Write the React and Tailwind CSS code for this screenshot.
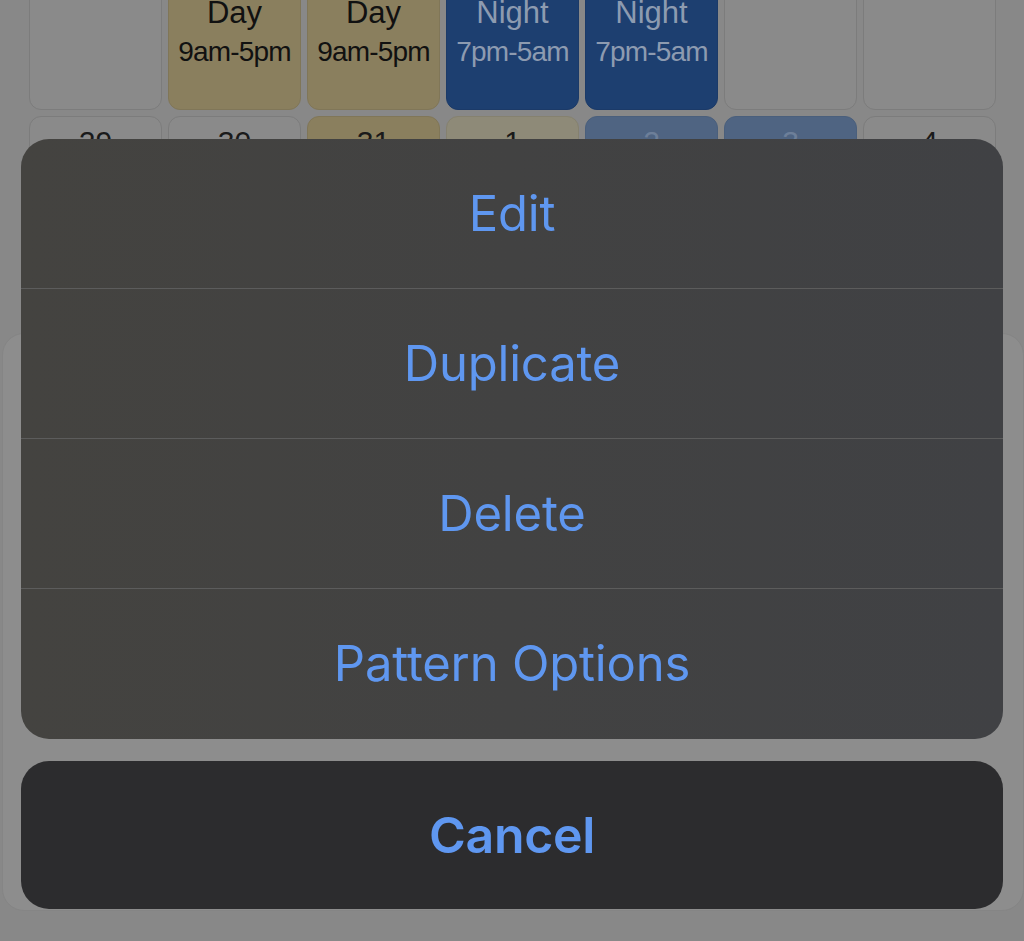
import React from "react";

const row1 = [
  { kind: "empty" },
  { kind: "day" },
  { kind: "day" },
  { kind: "night" },
  { kind: "night" },
  { kind: "empty" },
  { kind: "empty" },
];

const row2 = [
  { n: "29", cls: "bg-[#8a8a8a] border-[#7c7c7c]" },
  { n: "30", cls: "bg-[#8a8a8a] border-[#7c7c7c]" },
  { n: "31", cls: "bg-[#8a7f5e] border-[#807658]" },
  { n: "1", cls: "bg-[#8e8a78] border-[#85816f]" },
  { n: "2", cls: "bg-[#4f6482] border-[#4a5f7c] text-[#6d7f99]" },
  { n: "3", cls: "bg-[#4f6482] border-[#4a5f7c] text-[#6d7f99]" },
  { n: "4", cls: "bg-[#8a8a8a] border-[#7c7c7c]" },
];

function TopCell({ kind }) {
  if (kind === "day") {
    return (
      <div className="h-[150px] rounded-[12px] border border-[#807658] bg-[#8a7f5e] flex flex-col items-center pt-[36px] text-[#111] leading-none">
        <span className="text-[31px]">Day</span>
        <span className="text-[28px] mt-[10px] tracking-[-0.8px]">9am-5pm</span>
      </div>
    );
  }
  if (kind === "night") {
    return (
      <div className="h-[150px] rounded-[12px] border border-[#1b3a68] bg-[#1d3f70] flex flex-col items-center pt-[36px] text-[#8d9bb0] leading-none">
        <span className="text-[31px]">Night</span>
        <span className="text-[28px] mt-[10px] tracking-[-0.8px]">7pm-5am</span>
      </div>
    );
  }
  return <div className="h-[150px] rounded-[12px] border border-[#7c7c7c] bg-[#8a8a8a]" />;
}

function SheetButton({ label, last }) {
  return (
    <button
      className={
        "h-[150px] w-full flex items-center justify-center text-[49px] text-[#5f97f0] tracking-[-0.2px] " +
        (last ? "" : "border-b border-[#5c5c5c]")
      }
      style={{ fontFamily: "Inter, 'Liberation Sans', sans-serif" }}
    >
      {label}
    </button>
  );
}

export default function App() {
  return (
    <div
      className="relative w-[1024px] h-[941px] overflow-hidden bg-[#888888]"
      style={{ fontFamily: "'Liberation Sans', Arial, sans-serif" }}
    >
      {/* dimmed calendar behind */}
      <div className="mt-[-40px] px-[29px] pr-[28px] flex flex-col gap-[6px]">
        <div className="grid grid-cols-7 gap-[6px]">
          {row1.map((c, i) => (
            <TopCell key={i} kind={c.kind} />
          ))}
        </div>
        <div className="grid grid-cols-7 gap-[6px]">
          {row2.map((c, i) => (
            <div
              key={i}
              className={"h-[150px] rounded-[12px] border flex justify-center pt-[10px] text-[30px] leading-none text-[#1a1a1a] " + c.cls}
            >
              {c.n}
            </div>
          ))}
        </div>
      </div>

      {/* panel behind the sheet */}
      <div className="mt-[67px] ml-[2px] h-[578px] rounded-[22px] bg-[#8d8d8d] border border-[#858585]" />

      {/* action sheet */}
      <div className="absolute left-[21px] top-[139px] w-[982px] flex flex-col">
        <div className="rounded-[28px] overflow-hidden bg-gradient-to-r from-[#444340] to-[#404144] flex flex-col">
          <SheetButton label="Edit" />
          <SheetButton label="Duplicate" />
          <SheetButton label="Delete" />
          <SheetButton label="Pattern Options" last />
        </div>
        <button
          className="mt-[22px] h-[148px] rounded-[28px] bg-[#2c2c2e] flex items-center justify-center text-[50px] font-semibold text-[#5f97f0] tracking-[-0.3px]"
          style={{ fontFamily: "Inter, 'Liberation Sans', sans-serif" }}
        >
          Cancel
        </button>
      </div>
    </div>
  );
}
